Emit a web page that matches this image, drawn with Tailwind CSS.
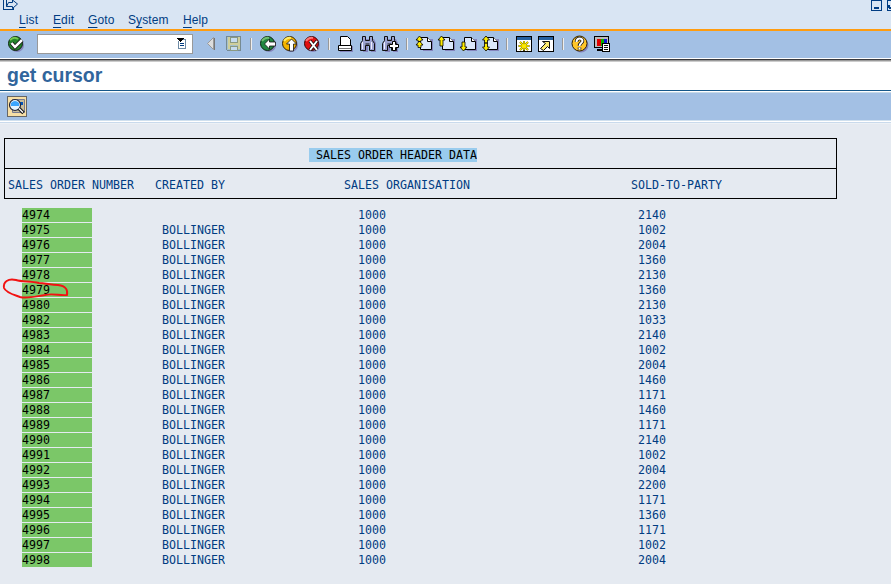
<!DOCTYPE html>
<html lang="en">
<head>
    <meta charset="UTF-8">
    <meta name="viewport" content="width=device-width, initial-scale=1.0">
    <title>get cursor</title>
    <script src="https://cdn.jsdelivr.net/npm/@tailwindcss/browser@4"></script>
</head>
<body class="h-[584px] w-[891px] overflow-hidden bg-[#e5eaf1] font-['Liberation_Sans',sans-serif]">
    <!-- Menu bar -->
    <header class="relative h-[29px] bg-[#d9e5f3] text-[#003c82]">
        <svg class="absolute left-[3px] top-0" width="16" height="11" fill="none" stroke="#003c82">
            <path d="M.5 0v9.500h9.500V7.500" shape-rendering="crispEdges" />
            <path d="M3.500 0v6.500M3.500 6.500l2-4h4V0l5 4-5 4.500V6.500h-6" />
        </svg>
        <nav class="flex gap-[13px] pl-[19px] pt-[12px] text-[12px] leading-[16px] tracking-[0.1px]">
            <span class="w-[21px]"><u class="underline-offset-[3px]">L</u>ist</span>
            <span class="w-[22px]"><u class="underline-offset-[3px]">E</u>dit</span>
            <span class="w-[27px]"><u class="underline-offset-[3px]">G</u>oto</span>
            <span class="w-[42px]">S<u class="underline-offset-[3px]">y</u>stem</span>
            <span class="w-[27px]"><u class="underline-offset-[3px]">H</u>elp</span>
        </nav>
        <svg class="absolute right-0 top-0" width="20" height="11" fill="none" stroke="#003c82" shape-rendering="crispEdges">
            <path d="M.5 0v10.500h10V0M0 .5h11M16.500 0v10.500h4M16 .5h4" />
            <path d="M3 8h5M18 8h2M18 5v3" stroke-width="2" />
        </svg>
    </header>
    <div class="h-[2px] bg-[#ff9c0f]"></div>

    <!-- Standard toolbar -->
    <div class="relative h-[27px] bg-[#a3c0e4]">
        <div class="ml-[37px] flex h-[23px] items-end">
            <div class="flex h-[20px] w-[156px] items-center justify-end border border-[#999] bg-white pr-[5px]">
                <svg width="10" height="12" fill="none" shape-rendering="crispEdges">
                    <path d="M1.500 3v7.500h7V1.500H6" stroke="#6f8ba5" />
                    <path d="M3 5.500h4M3 7.500h4" stroke="#003c82" />
                    <path d="M0 0h7v1H6v1H5v1H4v1H3V3H2V2H1V1H0z" fill="#000" />
                </svg>
            </div>
        </div>
        <svg class="absolute left-0 top-0" width="620" height="27" viewBox="0 31 620 27" fill="none">
            <!-- enter -->
            <circle cx="17" cy="45" r="7" fill="#8585bd" />
            <circle cx="15.500" cy="43.500" r="7" fill="#23852b" stroke="#102610" />
            <path d="M10 40q4-4 8-1" stroke="#75c850" stroke-width="2" />
            <path d="M11.500 43l3.500 4 7-7" stroke="#111" stroke-width="4" />
            <path d="M11.500 43l3.500 4 7-7" stroke="#fff" stroke-width="2.500" />
            <!-- collapse and save -->
            <path d="M207.500 43.500l6-6v12z" fill="#ddd" stroke="#999" />
            <path d="M214.500 38v12" stroke="#777" />
            <g shape-rendering="crispEdges">
                <path d="M226.500 36.500h14v14h-13l-1-1z" fill="#a5c0cc" stroke="#768a92" />
                <path d="M228.500 37v12M238.500 37v12M229 43.500h9" stroke="#cfcf9c" stroke-width="2" />
                <path d="M230 37h7v5h-7zM230 46h7v4h-7z" fill="#c6dcf0" stroke="#8b9a82" />
            </g>
            <!-- separators -->
            <g shape-rendering="crispEdges">
                <path d="M250.500 38v12M328.500 38v12M406.500 38v12M506.500 38v12M562.500 38v12" stroke="#999" />
                <path d="M251.500 38v12M329.500 38v12M407.500 38v12M507.500 38v12M563.500 38v12" stroke="#eee" />
            </g>
            <!-- back, exit, cancel -->
            <g fill="#8585bd"><circle cx="269" cy="45" r="7" /><circle cx="291" cy="45" r="7" /><circle cx="313" cy="45" r="7" /></g>
            <circle cx="267.500" cy="43.500" r="7" fill="#218642" stroke="#102610" />
            <circle cx="289.500" cy="43.500" r="7" fill="#f5b400" stroke="#332400" />
            <circle cx="311.500" cy="43.500" r="7" fill="#e01010" stroke="#350808" />
            <path d="M262 41q3-4 7-3" stroke="#70bd70" stroke-width="2" />
            <path d="M284 41q3-4 7-3" stroke="#ffed63" stroke-width="2" />
            <path d="M306 41q3-4 7-3" stroke="#ff7777" stroke-width="2" />
            <g fill="#fff" stroke="#111" stroke-width=".8">
                <path d="M264.500 44l5-5v3h6v4h-6v3z" />
                <path d="M291.500 39l5 5h-3v7h-4v-7h-3z" />
            </g>
            <path d="M310 41l7 9M317 41l-7 9" stroke="#111" stroke-width="3.500" />
            <path d="M310 41l7 9M317 41l-7 9" stroke="#fff" stroke-width="2" />
            <!-- print -->
            <path d="M340 46h13v6h-13z" fill="#8585bd" />
            <path d="M340.500 36.500h7l3 3v6h-10zM338.500 45.500h13v5h-13z" fill="#fff" stroke="#000" />
            <path d="M339 48.500h12" stroke="#777" />
            <!-- find, find next -->
            <g id="find">
                <path d="M363 39h11l2 4v9h-5v-6h-3v6h-5z" fill="#8585bd" />
                <path d="M362.500 36.500h3v4h4v-4h3v4l2 3v7h-5v-5h-4v5h-5v-7l2-3z" fill="#9da3d0" stroke="#111" />
                <path d="M362.500 42v7M371.500 42v7" stroke="#eef0ff" />
                <path d="M365.500 44h4" stroke="#111" />
            </g>
            <use href="#find" x="22" />
            <path d="M389.500 44.500h3v-3h3v3h3v3h-3v3h-3v-3h-3z" fill="#fff" stroke="#000" />
            <!-- page navigation -->
            <g id="sheet">
                <path d="M423 39h10v12h-10z" fill="#8585bd" />
                <path d="M420.500 37.500h7l4 4v8h-11z" fill="#dbe8fb" stroke="#000" />
                <path d="M427.500 37.500v4h4" fill="#fff" stroke="#000" />
            </g>
            <use href="#sheet" x="22" />
            <use href="#sheet" x="44" />
            <use href="#sheet" x="66" />
            <g fill="#ffed00" stroke="#000" stroke-width=".8">
                <path d="M419.500 36l3.500 4h-2v1.500h-3V40h-2zM419.500 41l3.500 4h-2v2.500h-3V45h-2z" />
                <path d="M441.500 36l3.500 4h-2v6h-3v-6h-2z" />
                <path d="M463.500 51l3.500-4h-2v-5h-3v5h-2z" />
                <path d="M486 36l3.500 4h-2v3h-3v-3h-2zM486 51l3.500-4h-2v-4h-3v4h-2z" />
            </g>
            <!-- new session, shortcut -->
            <g shape-rendering="crispEdges">
                <path d="M516.500 36.500h15v15h-15zM538.500 36.500h15v15h-15z" fill="#fff" stroke="#000" />
                <path d="M517 38.500h14M539 38.500h14" stroke="#245e9e" stroke-width="3" />
            </g>
            <path d="M524 41v10M518.500 46h11M520 42l8 8M528 42l-8 8" stroke="#554b00" stroke-width="2" />
            <path d="M524 41v9M519 46h10M520 42l8 8M528 42l-8 8" stroke="#ffec00" stroke-width="1.300" />
            <path d="M542.500 41.500h7v7l-2-2-4 4-3-2 5-5z" fill="#ffed70" stroke="#111" />
            <!-- help -->
            <circle cx="581" cy="45" r="7.500" fill="#8585bd" />
            <circle cx="579.500" cy="43.500" r="7.500" fill="#ffc629" stroke="#332400" />
            <path d="M576.500 42c0-5 6-4 6-1 0 2-3 2-3 5M579.500 47.500v2" stroke="#111" stroke-width="3.500" />
            <path d="M576.500 42c0-5 6-4 6-1 0 2-3 2-3 5M579.500 47.500v2" stroke="#fff" stroke-width="2" />
            <!-- layout -->
            <g shape-rendering="crispEdges">
                <path d="M594.500 36.500h14v11h-14z" fill="#bbb" stroke="#000" />
                <path d="M597 39h4v7h-4z" fill="#e00000" />
                <path d="M601 39h3v7h-3z" fill="#00b000" />
                <path d="M604 39h3v7h-3z" fill="#1010d0" />
                <path d="M597 50h6" stroke="#000" stroke-width="2" />
                <path d="M602.500 43.500h7v8h-7z" fill="#fff" stroke="#000" />
                <path d="M604 45.500h4M604 47.500h4M604 49.500h4" stroke="#111" />
            </g>
        </svg>
    </div>
    <div class="h-px bg-white"></div>
    <div class="h-px bg-[#38383c]"></div>
    <div class="h-px bg-[#999]"></div>
    <div class="h-px bg-[#ccc]"></div>

    <!-- Title -->
    <h1 class="h-[28px] bg-white pl-[7px] text-[19.500px] font-bold leading-[26px] text-[#31659c]">get cursor</h1>
    <div class="h-px bg-[#165789]"></div>
    <div class="h-px bg-white"></div>
    <div class="h-px bg-[#c5d9e9]"></div>

    <!-- Application toolbar -->
    <div class="h-[27px] bg-[#a3c0e4] pl-[7px] pt-[3px]">
        <svg width="20" height="21" fill="none">
            <path d="M.5.5h19v20H.500z" fill="#f7dfa5" stroke="#666" shape-rendering="crispEdges" />
            <path d="M5.500 3.500h12v13h-12z" fill="#c8bd9c" stroke="#777b91" />
            <path d="M8 6h8v3h-8z" fill="#0052b8" />
            <circle cx="8" cy="9" r="5.500" fill="#e6f3ff" stroke="#223" stroke-width="1.200" />
            <path d="M4 7q4-4 8 0v3H4z" fill="#3ca5ff" />
            <path d="M12 12.500l4.500 4.500" stroke="#111" stroke-width="3.500" />
            <path d="M12 12.500l4 4" stroke="#fff" stroke-width="1.500" />
        </svg>
    </div>
    <div class="h-px bg-[#d0e0ee]"></div>
    <div class="h-px bg-white"></div>
    <div class="h-px bg-[#c9daec]"></div>
    <div class="h-px bg-[#edf1f5]"></div>

    <!-- List output -->
    <main class="pt-[14px] font-['DejaVu_Sans_Mono',monospace] text-[11.630px] leading-[15px] text-[#003c82]">
        <div class="ml-[4px] h-[61px] w-[833px] border border-black">
            <div class="flex h-[30px] border-b border-black pl-[304px] pt-[9px]">
                <div class="h-[14px] w-[168px] whitespace-pre bg-[#99ccee] leading-[14px] text-black"><span class="inline-block scale-y-105"> SALES ORDER HEADER DATA</span></div>
            </div>
            <div class="grid grid-cols-[147px_189px_287px_1fr] whitespace-nowrap pl-[3px] pt-[9px]">
                <span class="scale-y-105">SALES ORDER NUMBER</span>
                <span class="scale-y-105">CREATED BY</span>
                <span class="scale-y-105">SALES ORGANISATION</span>
                <span class="scale-y-105">SOLD-TO-PARTY</span>
            </div>
        </div>
        <div class="relative pt-[9px]">
            <div id="rows"></div>
            <!-- hand-drawn marker around 4979 -->
            <svg class="absolute left-0 top-[76px]" width="75" height="28" viewBox="0 275 75 28" fill="none">
                <path d="M39 283C30 281 22 282 16 280C8 278 3 282 4 288C6 293 15 295 20 297C27 299 37 296 45 295C53 293 60 296 67 295C68 290 66 286 58 285C51 285 45 283 38 283" stroke="#f21313" stroke-width="1.900" />
            </svg>
        </div>
    </main>

    <script>
        // number, created by, sold-to party
        const orders = [
            [4974, '', 2140], [4975, 'BOLLINGER', 1002], [4976, 'BOLLINGER', 2004],
            [4977, 'BOLLINGER', 1360], [4978, 'BOLLINGER', 2130], [4979, 'BOLLINGER', 1360],
            [4980, 'BOLLINGER', 2130], [4982, 'BOLLINGER', 1033], [4983, 'BOLLINGER', 2140],
            [4984, 'BOLLINGER', 1002], [4985, 'BOLLINGER', 2004], [4986, 'BOLLINGER', 1460],
            [4987, 'BOLLINGER', 1171], [4988, 'BOLLINGER', 1460], [4989, 'BOLLINGER', 1171],
            [4990, 'BOLLINGER', 2140], [4991, 'BOLLINGER', 1002], [4992, 'BOLLINGER', 2004],
            [4993, 'BOLLINGER', 2200], [4994, 'BOLLINGER', 1171], [4995, 'BOLLINGER', 1360],
            [4996, 'BOLLINGER', 1171], [4997, 'BOLLINGER', 1002], [4998, 'BOLLINGER', 2004]
        ];

        document.getElementById('rows').innerHTML = orders.map(([number, user, party]) => `
            <div class="grid h-[15px] grid-cols-[140px_196px_280px_1fr] pl-[22px] leading-[14px]">
                <div class="h-[14px] w-[70px] bg-[#7bc768] text-black"><span class="inline-block scale-y-105">${number}</span></div>
                <span class="scale-y-105">${user}</span>
                <span class="scale-y-105">1000</span>
                <span class="scale-y-105">${party}</span>
            </div>`).join('');
    </script>
</body>
</html>
